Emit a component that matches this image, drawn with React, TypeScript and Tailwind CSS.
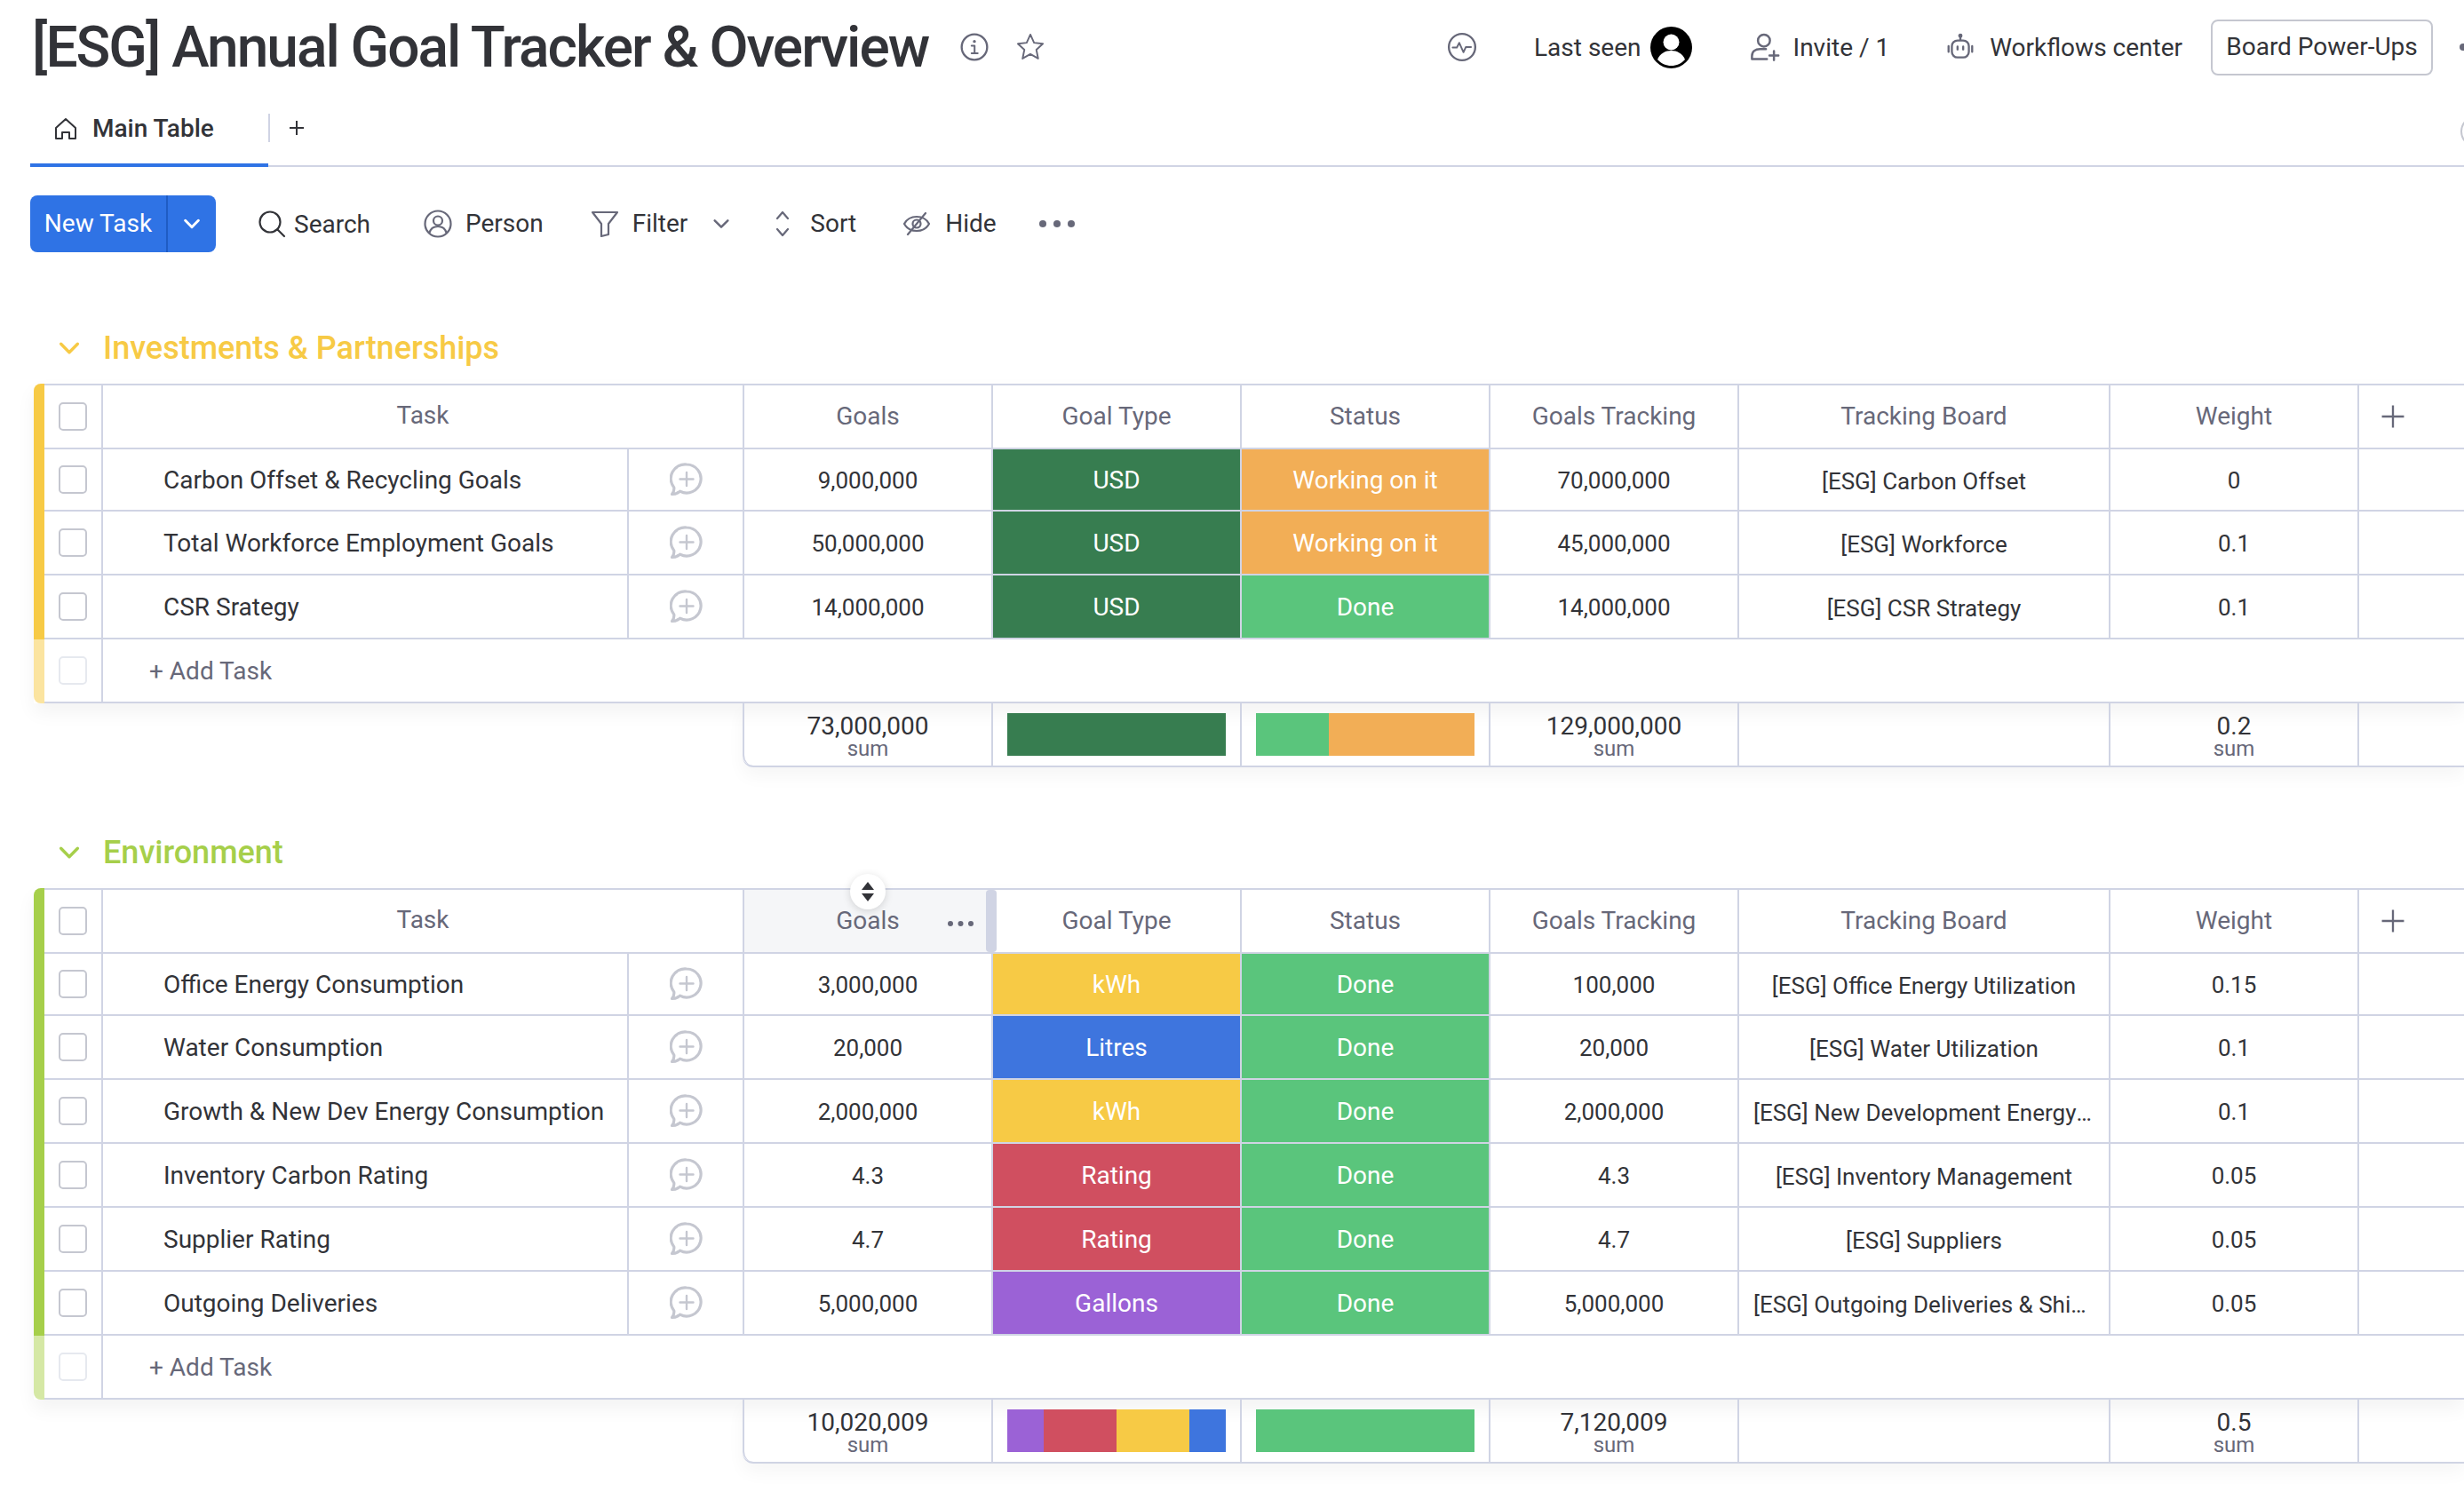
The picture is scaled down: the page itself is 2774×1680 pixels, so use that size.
import React from "react";

const line = "border-[#d0d4e4]";

function Svg({ size = 32, children, className = "", sw = 2.2 }: { size?: number; children: React.ReactNode; className?: string; sw?: number }) {
  return (
    <svg width={size} height={size} viewBox="0 0 32 32" fill="none" stroke="currentColor" strokeWidth={sw} strokeLinecap="round" strokeLinejoin="round" className={`shrink-0 ${className}`}>
      {children}
    </svg>
  );
}

const Info = () => (
  <Svg className="text-[#676879]" size={34}>
    <circle cx="16" cy="16" r="13.5" />
    <circle cx="16" cy="10" r="1.6" fill="currentColor" stroke="none" />
    <path d="M13 14.5H16.2V22.5M13 22.5H19.5" strokeWidth={1.9} />
  </Svg>
);
const Star = () => (
  <Svg className="text-[#676879]" size={36} sw={1.7}>
    <path d="M16 3.5l3.7 8.2 8.8 1-6.5 6 1.8 8.8L16 23l-7.8 4.5L10 18.7l-6.5-6 8.8-1z" />
  </Svg>
);
const Activity = () => (
  <Svg className="text-[#676879]" size={34}>
    <circle cx="16" cy="16" r="14" />
    <path d="M6 16.5h4.5l2.5-5 4.5 10 2.5-5.5h5.5" strokeWidth={1.8} />
  </Svg>
);
const Avatar = () => (
  <svg width="47" height="47" viewBox="0 0 47 47" className="shrink-0">
    <circle cx="23.5" cy="23.5" r="23.5" fill="#000" />
    <circle cx="23.5" cy="17.5" r="9" fill="#fff" />
    <path d="M8 37c3-7 9-10 15.5-10S36 30 39 37c-4 4.5-9.5 7-15.5 7S12 41.5 8 37z" fill="#fff" />
  </svg>
);
const InviteIcon = () => (
  <Svg className="text-[#676879]" size={36}>
    <circle cx="15" cy="9.5" r="6" />
    <path d="M3 28v-3c0-4.5 3.5-7 8-7h6M18 28H3M25 20v9M20.5 24.5h9" />
  </Svg>
);
const Robot = () => (
  <Svg className="text-[#676879]" size={34}>
    <path d="M16 4v4" />
    <rect x="7" y="9" width="18" height="18" rx="6" />
    <path d="M3.5 15v6M28.5 15v6M13 15.5v3M19 15.5v3" />
    <circle cx="16" cy="4" r="1.2" fill="currentColor" />
  </Svg>
);
const Home = () => (
  <svg width="28" height="28" viewBox="0 0 28 28" fill="none" stroke="#323338" strokeWidth={2} strokeLinejoin="round" className="shrink-0">
    <path d="M3 13L14 3l11 10v12H18v-7h-8v7H3z" />
  </svg>
);
const Plus = ({ size = 18, color = "#323338", w = 2 }: { size?: number; color?: string; w?: number }) => (
  <svg width={size} height={size} viewBox="0 0 18 18" stroke={color} strokeWidth={w} className="shrink-0">
    <path d="M9 1v16M1 9h16" />
  </svg>
);
const Chevron = ({ size = 18, color = "currentColor", w = 2 }: { size?: number; color?: string; w?: number }) => (
  <svg width={size} height={size} viewBox="0 0 18 18" fill="none" stroke={color} strokeWidth={w} strokeLinecap="round" strokeLinejoin="round" className="shrink-0">
    <path d="M3 6l6 6 6-6" />
  </svg>
);
const SearchI = () => (
  <Svg className="text-[#323338]">
    <circle cx="14" cy="14" r="11.5" />
    <path d="M22.5 22.5l7.5 7.5" />
  </Svg>
);
const PersonI = () => (
  <Svg className="text-[#676879]">
    <circle cx="16" cy="16" r="14.5" />
    <circle cx="16" cy="12.5" r="5" />
    <path d="M6.5 26c1.5-5 5-7 9.5-7s8 2 9.5 7" />
  </Svg>
);
const FilterI = () => (
  <Svg className="text-[#676879]">
    <path d="M2 3h28L20 16v12l-8 2V16z" />
  </Svg>
);
const SortI = () => (
  <Svg className="text-[#676879]">
    <path d="M10 10l6-7 6 7M10 22l6 7 6-7" />
  </Svg>
);
const HideI = () => (
  <Svg className="text-[#676879]">
    <path d="M2 16c3-5.5 8-8 14-8s11 2.5 14 8c-3 5.5-8 8-14 8s-11-2.5-14-8z" />
    <circle cx="16" cy="16" r="4.5" />
    <path d="M6 28L26 4" />
  </Svg>
);
const Dots = ({ color = "#676879", w = 40, r = 3.5 }: { color?: string; w?: number; r?: number }) => (
  <svg width={w} height="10" viewBox={`0 0 ${w} 10`} fill={color} className="shrink-0">
    <circle cx={r} cy="5" r={r} />
    <circle cx={w / 2} cy="5" r={r} />
    <circle cx={w - r} cy="5" r={r} />
  </svg>
);
const ChatPlus = () => (
  <svg width="38" height="38" viewBox="0 0 38 38" fill="none" stroke="#c5c7d0" strokeWidth={3.2} strokeLinecap="round" strokeLinejoin="round" className="shrink-0">
    <path d="M19 2a16 16 0 1 1-7.5 30.1C9 34.5 6 35.5 2.5 35.5c1.7-2 2.6-4.5 2.3-7.5A16 16 0 0 1 19 2z" />
    <path d="M19 11v15M11.5 18.5h15" strokeWidth={2.4} />
  </svg>
);
const Check = ({ faint = false }: { faint?: boolean }) => (
  <div className={`w-[32px] h-[32px] rounded-[5px] border-2 bg-white ${faint ? "border-[#e6e9ef]" : "border-[#c5c7d0]"}`} />
);

const cellBorder = `border-l-2 ${line}`;

function HeaderCell({ label, w }: { label: string; w: string }) {
  return (
    <div className={`${w} ${cellBorder} h-full flex items-center justify-center text-[#676879] text-[28px] shrink-0`}>
      {label}
    </div>
  );
}

function ColoredCell({ label, bg }: { label: string; bg: string }) {
  return (
    <div className={`w-[280px] shrink-0 h-full ${cellBorder}`}>
      <div className={`h-full w-full flex items-center justify-center pt-[2px] text-white text-[28px] ${bg}`}>{label}</div>
    </div>
  );
}

function TextCell({ label, w, extra = "pt-[2px]" }: { label: string; w: string; extra?: string }) {
  return (
    <div className={`${w} ${cellBorder} h-full shrink-0 flex items-center justify-center text-[#323338] text-[26px] ${extra}`}>
      <span className="truncate px-4">{label}</span>
    </div>
  );
}

type Row = { task: string; goals: string; type: string; typeBg: string; status: string; statusBg: string; tracking: string; board: string; weight: string };

const green = "bg-[#377d50]";
const orange = "bg-[#f2ae56]";
const done = "bg-[#5ac57c]";
const yellow = "bg-[#f7ca45]";
const blue = "bg-[#3e75de]";
const red = "bg-[#d04f60]";
const purple = "bg-[#9b62d6]";

const rows1: Row[] = [
  { task: "Carbon Offset & Recycling Goals", goals: "9,000,000", type: "USD", typeBg: green, status: "Working on it", statusBg: orange, tracking: "70,000,000", board: "[ESG] Carbon Offset", weight: "0" },
  { task: "Total Workforce Employment Goals", goals: "50,000,000", type: "USD", typeBg: green, status: "Working on it", statusBg: orange, tracking: "45,000,000", board: "[ESG] Workforce", weight: "0.1" },
  { task: "CSR Srategy", goals: "14,000,000", type: "USD", typeBg: green, status: "Done", statusBg: done, tracking: "14,000,000", board: "[ESG] CSR Strategy", weight: "0.1" },
];
const rows2: Row[] = [
  { task: "Office Energy Consumption", goals: "3,000,000", type: "kWh", typeBg: yellow, status: "Done", statusBg: done, tracking: "100,000", board: "[ESG] Office Energy Utilization", weight: "0.15" },
  { task: "Water Consumption", goals: "20,000", type: "Litres", typeBg: blue, status: "Done", statusBg: done, tracking: "20,000", board: "[ESG] Water Utilization", weight: "0.1" },
  { task: "Growth & New Dev Energy Consumption", goals: "2,000,000", type: "kWh", typeBg: yellow, status: "Done", statusBg: done, tracking: "2,000,000", board: "[ESG] New Development Energy Consumption", weight: "0.1" },
  { task: "Inventory Carbon Rating", goals: "4.3", type: "Rating", typeBg: red, status: "Done", statusBg: done, tracking: "4.3", board: "[ESG] Inventory Management", weight: "0.05" },
  { task: "Supplier Rating", goals: "4.7", type: "Rating", typeBg: red, status: "Done", statusBg: done, tracking: "4.7", board: "[ESG] Suppliers", weight: "0.05" },
  { task: "Outgoing Deliveries", goals: "5,000,000", type: "Gallons", typeBg: purple, status: "Done", statusBg: done, tracking: "5,000,000", board: "[ESG] Outgoing Deliveries & Shipping", weight: "0.05" },
];

function SumValue({ value, w, round = "" }: { value: string; w: string; round?: string }) {
  return (
    <div className={`${w} ${cellBorder} ${round} shrink-0 h-full flex flex-col items-center justify-center pt-[2px]`}>
      <span className="text-[28px] leading-[30px] text-[#323338]">{value}</span>
      <span className="text-[24px] leading-[20px] text-[#676879]">sum</span>
    </div>
  );
}

function BarCell({ segs }: { segs: [string, number][] }) {
  return (
    <div className={`w-[280px] ${cellBorder} shrink-0 h-full flex items-center justify-center`}>
      <div className="flex w-[246px] h-[48px]">
        {segs.map(([c, w], i) => (
          <div key={i} className={`h-full ${c}`} style={{ width: w }} />
        ))}
      </div>
    </div>
  );
}

function Group({
  title, titleColor, chevron, barBg, barLight, rows, hover, typeSegs, statusSegs, goalsSum, trackingSum, weightSum,
}: {
  title: string; titleColor: string; chevron: string; barBg: string; barLight: string; rows: Row[]; hover?: boolean;
  typeSegs: [string, number][]; statusSegs: [string, number][]; goalsSum: string; trackingSum: string; weightSum: string;
}) {
  return (
    <section>
      <div className="flex items-center h-[60px] mb-[10px] pl-[64px]">
        <Chevron size={28} color={chevron} w={2.2} />
        <h2 className={`ml-[24px] text-[36px] font-medium leading-none ${titleColor}`}>{title}</h2>
      </div>
      <div className="pl-[38px]">
        <div className="flex shadow-[0_10px_20px_rgba(0,0,0,0.05)]">
          <div className="w-3 shrink-0 flex flex-col">
            <div className={`rounded-tl-lg ${barBg}`} style={{ height: 288 + (rows.length - 3) * 72 }} />
            <div className={`flex-1 rounded-bl-lg ${barLight}`} />
          </div>
          <div className={`flex-1 border-t-2 ${line}`}>
            <div className={`flex items-stretch h-[72px] border-b-2 ${line}`}>
              <div className="w-[64px] shrink-0 flex items-center pl-[16px]"><Check /></div>
              <div className={`w-[722px] ${cellBorder} shrink-0 flex items-center justify-center pb-[2px] text-[#676879] text-[28px]`}>Task</div>
              {hover ? (
                <div className={`relative w-[280px] ${cellBorder} shrink-0 h-full flex items-center justify-center text-[#676879] text-[28px] bg-[#f5f6f8]`}>
                  Goals
                  <div className="absolute right-[20px] top-[33px]"><Dots w={29} r={3} /></div>
                  <div className="absolute right-[-6px] top-0 bottom-0 w-[12px] rounded-[4px] bg-[#d0d4e4]" />
                  <div className="absolute left-[119px] top-[-18px] w-[40px] h-[40px] rounded-full bg-white shadow-[0_2px_10px_rgba(0,0,0,0.15)] flex items-center justify-center">
                    <svg width="16" height="22" viewBox="0 0 16 22" fill="#323338"><path d="M8 0l7 9H1zM8 22l7-9H1z" /></svg>
                  </div>
                </div>
              ) : (
                <HeaderCell label="Goals" w="w-[280px]" />
              )}
              <HeaderCell label="Goal Type" w="w-[280px]" />
              <HeaderCell label="Status" w="w-[280px]" />
              <HeaderCell label="Goals Tracking" w="w-[280px]" />
              <HeaderCell label="Tracking Board" w="w-[418px]" />
              <HeaderCell label="Weight" w="w-[280px]" />
              <div className={`flex-1 ${cellBorder} flex items-center pl-[24px]`}><Plus size={28} color="#676879" w={1.5} /></div>
            </div>
            {rows.map((r, i) => (
              <div key={r.task} className={`flex items-stretch border-b-2 ${line} ${i === 0 ? "h-[70px]" : "h-[72px]"}`}>
                <div className="w-[64px] shrink-0 flex items-center pl-[16px]"><Check /></div>
                <div className={`w-[592px] ${cellBorder} shrink-0 flex items-center pl-[68px] pt-[2px] text-[#323338] text-[28px] whitespace-nowrap`}>{r.task}</div>
                <div className={`w-[130px] ${cellBorder} shrink-0 flex items-center justify-center pl-[2px]`}><ChatPlus /></div>
                <TextCell label={r.goals} w="w-[280px]" />
                <ColoredCell label={r.type} bg={r.typeBg} />
                <ColoredCell label={r.status} bg={r.statusBg} />
                <TextCell label={r.tracking} w="w-[280px]" />
                <TextCell label={r.board} w="w-[418px]" extra="pt-[4px]" />
                <TextCell label={r.weight} w="w-[280px]" />
                <div className={`flex-1 ${cellBorder}`} />
              </div>
            ))}
            <div className={`flex items-stretch h-[72px] border-b-2 ${line}`}>
              <div className="w-[64px] shrink-0 flex items-center pl-[16px]"><Check faint /></div>
              <div className={`flex-1 ${cellBorder} flex items-center pl-[52px] pt-[2px] text-[#676879] text-[28px]`}>+ Add Task</div>
            </div>
          </div>
        </div>
        <div className={`ml-[798px] h-[72px] flex items-stretch border-b-2 ${line} rounded-bl-xl shadow-[0_10px_20px_rgba(0,0,0,0.04)]`}>
          <SumValue value={goalsSum} w="w-[280px]" round="rounded-bl-xl" />
          <BarCell segs={typeSegs} />
          <BarCell segs={statusSegs} />
          <SumValue value={trackingSum} w="w-[280px]" />
          <div className={`w-[418px] ${cellBorder} shrink-0`} />
          <SumValue value={weightSum} w="w-[280px]" />
          <div className={`flex-1 ${cellBorder}`} />
        </div>
      </div>
    </section>
  );
}

function ToolItem({ icon, label, className = "", gap = "ml-[15px]" }: { icon: React.ReactNode; label: string; className?: string; gap?: string }) {
  return (
    <div className={`flex items-center ${className}`}>
      {icon}
      <span className={`text-[28px] text-[#323338] whitespace-nowrap ${gap}`}>{label}</span>
    </div>
  );
}

export default function App() {
  return (
    <div className="w-[2774px] h-[1680px] overflow-hidden bg-white font-['Roboto',sans-serif] text-[#323338]">
      <header className="h-[106px] flex items-center pl-[36px] relative">
        <h1 className="text-[64px] font-medium tracking-[-2px] text-[#323338] leading-none whitespace-nowrap mt-[2px]">[ESG] Annual Goal Tracker &amp; Overview</h1>
        <div className="ml-[35px]"><Info /></div>
        <div className="ml-[28px]"><Star /></div>
        <div className="ml-auto flex items-center">
          <Activity />
          <span className="ml-[64px] mt-[2px] text-[28px] whitespace-nowrap">Last seen</span>
          <div className="ml-[10px]"><Avatar /></div>
          <div className="ml-[64px] flex items-center"><InviteIcon /><span className="ml-[14px] mt-[2px] text-[28px] whitespace-nowrap">Invite / 1</span></div>
          <div className="ml-[63px] flex items-center"><Robot /><span className="ml-[16px] mt-[2px] text-[28px] whitespace-nowrap">Workflows center</span></div>
          <div className="ml-[32px] h-[63px] w-[250px] rounded-[8px] border-2 border-[#c5c7d0] flex items-center justify-center text-[28px] whitespace-nowrap">Board Power-Ups</div>
          <div className="ml-[30px] w-[5px] overflow-hidden"><Dots w={40} r={4} /></div>
        </div>
      </header>

      <div className={`ml-[34px] h-[82px] flex border-b-2 ${line} relative`}>
        <div className="w-[268px] h-[82px] border-b-4 border-[#2f73e5] flex items-center pl-[26px]">
          <Home />
          <span className="ml-[16px] text-[28px] font-medium">Main Table</span>
        </div>
        <div className="flex items-center pb-[4px]">
          <div className={`h-[32px] border-l-2 ${line}`} />
          <div className="ml-[21px]"><Plus size={18} color="#323338" w={2} /></div>
        </div>
        <div className="absolute right-[-36px] top-[24px] w-[40px] h-[36px] rounded-full border-2 border-[#c5c7d0]" />
      </div>

      <div className="ml-[34px] mt-[32px] h-[64px] flex items-center">
        <div className="h-[64px] w-[209px] rounded-[8px] bg-[#2f73e5] flex text-white shrink-0">
          <div className="w-[155px] flex items-center justify-center text-[28px] border-r-2 border-[#1f5cc4]">New Task</div>
          <div className="flex-1 flex items-center justify-center"><Chevron size={22} color="#fff" w={2.4} /></div>
        </div>
        <ToolItem className="ml-[47px]" icon={<SearchI />} label="Search" gap="ml-[9px] mt-[2px]" />
        <ToolItem className="ml-[60px]" icon={<PersonI />} label="Person" />
        <ToolItem className="ml-[53px]" icon={<FilterI />} label="Filter" />
        <div className="ml-[27px]"><Chevron size={22} color="#676879" w={2} /></div>
        <ToolItem className="ml-[42px]" icon={<SortI />} label="Sort" />
        <ToolItem className="ml-[52px]" icon={<HideI />} label="Hide" gap="ml-[16px]" />
        <div className="ml-[48px]"><Dots w={40} r={4} /></div>
      </div>

      <div className="mt-[78px] flex flex-col gap-[66px]">
        <Group
          title="Investments & Partnerships"
          titleColor="text-[#f7ca45]"
          chevron="#f7ca45"
          barBg="bg-[#f7ca45]"
          barLight="bg-[#fbe4a0]"
          rows={rows1}
          typeSegs={[[green, 246]]}
          statusSegs={[[done, 82], [orange, 164]]}
          goalsSum="73,000,000"
          trackingSum="129,000,000"
          weightSum="0.2"
        />
        <Group
          title="Environment"
          titleColor="text-[#a6cf4a]"
          chevron="#a6cf4a"
          barBg="bg-[#a6cf4a]"
          barLight="bg-[#d5e8a5]"
          rows={rows2}
          hover
          typeSegs={[[purple, 41], [red, 82], [yellow, 82], [blue, 41]]}
          statusSegs={[[done, 246]]}
          goalsSum="10,020,009"
          trackingSum="7,120,009"
          weightSum="0.5"
        />
      </div>
    </div>
  );
}
